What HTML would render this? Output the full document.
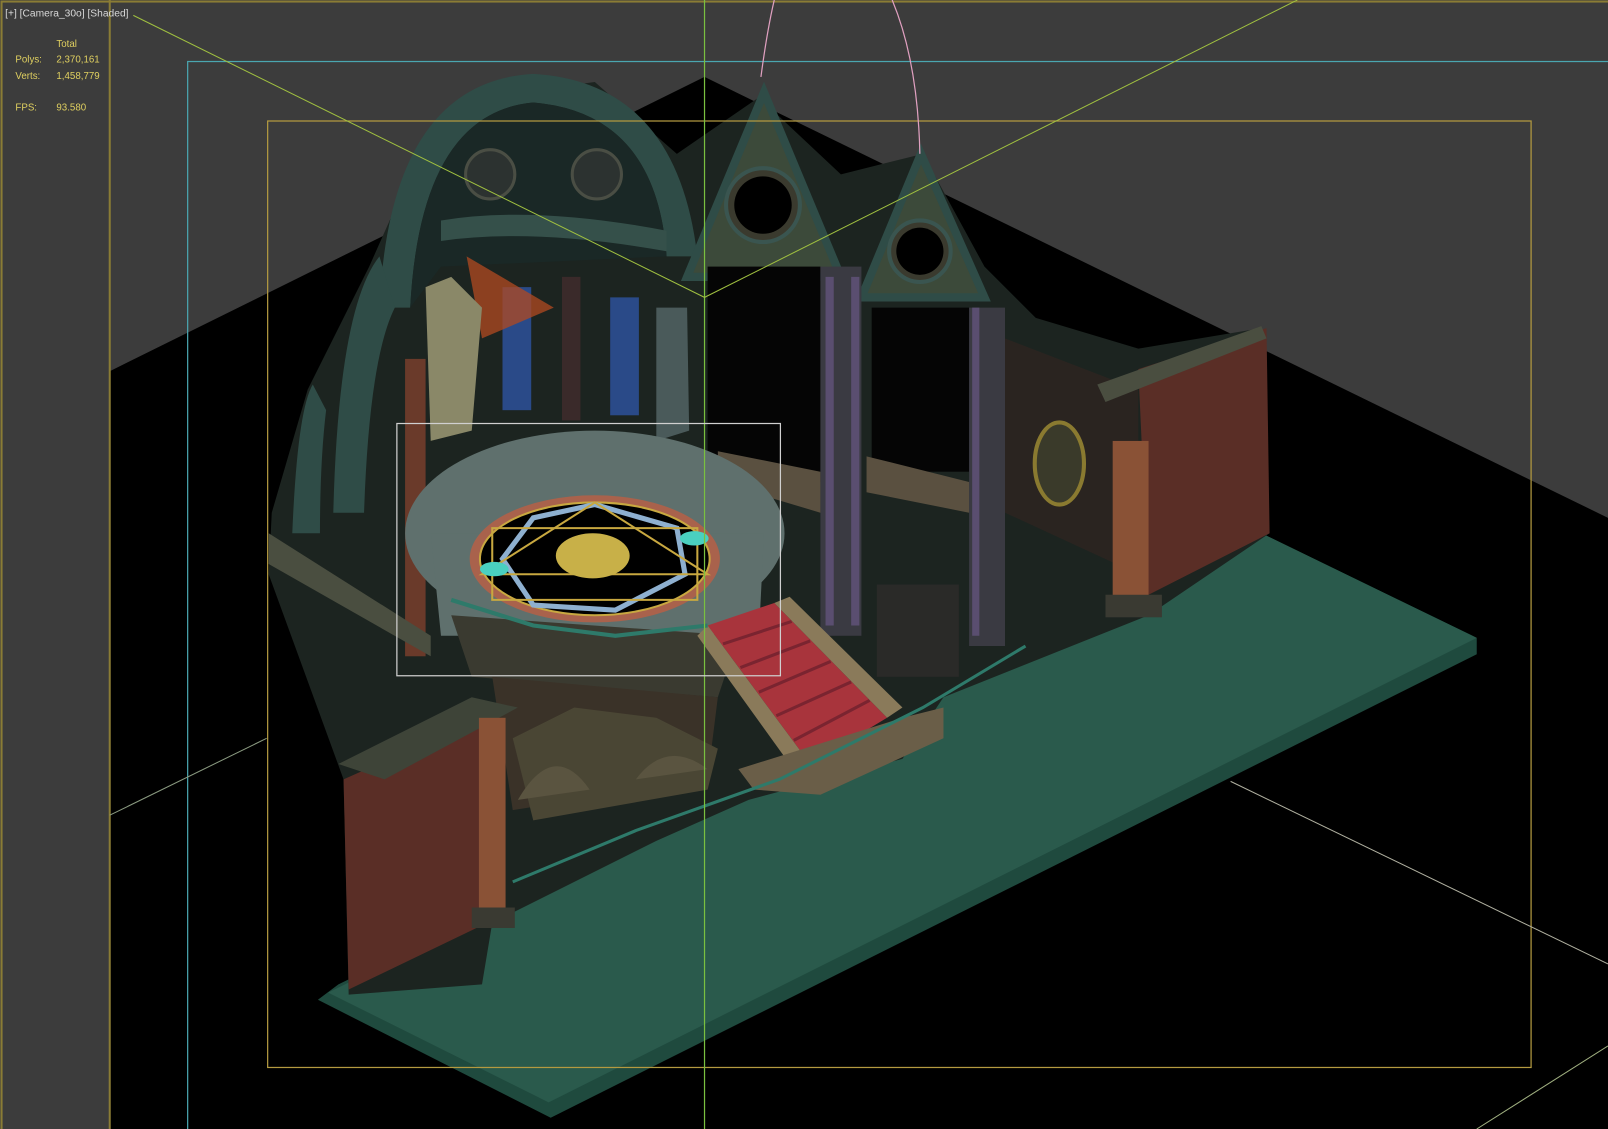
<!DOCTYPE html>
<html><head><meta charset="utf-8"><style>
html,body{margin:0;padding:0;background:#3c3c3c;overflow:hidden}
svg{display:block}
text{font-family:"Liberation Sans",sans-serif}
</style></head><body>
<svg width="1608" height="1129" viewBox="0 0 1568 1101" preserveAspectRatio="none" xmlns="http://www.w3.org/2000/svg">
<rect width="1568" height="1101" fill="#3c3c3c"/>
<polygon points="107,362 687,75 1568,505 1568,1101 107,1101" fill="#000"/>
<rect x="1.5" y="1.5" width="1570" height="1110" fill="none" stroke="#8a7c35" stroke-width="2"/>
<line x1="107" y1="0" x2="107" y2="1101" stroke="#8a7c35" stroke-width="2"/>
<text x="5" y="16" font-size="10" fill="#d8d8d8">[+] [Camera_30o] [Shaded]</text>
<text x="55" y="46" font-size="9.5" fill="#e0d060">Total</text>
<text x="15" y="61" font-size="9.5" fill="#e0d060">Polys:</text>
<text x="55" y="61" font-size="9.5" fill="#e0d060">2,370,161</text>
<text x="15" y="77" font-size="9.5" fill="#e0d060">Verts:</text>
<text x="55" y="77" font-size="9.5" fill="#e0d060">1,458,779</text>
<text x="15" y="108" font-size="9.5" fill="#e0d060">FPS:</text>
<text x="55" y="108" font-size="9.5" fill="#e0d060">93.580</text>

<polygon points="1230,520 1440,622 1440,638 537,1090 310,975 330,960" fill="#1f4a3e"/>
<polygon points="1230,520 1440,622 535,1075 320,968" fill="#2a5a4c"/>

<polygon points="265,500 300,380 360,260 400,170 470,95 580,80 660,150 740,95 820,170 900,150 960,260 1010,310 1110,340 1230,320 1238,520 1120,600 920,680 880,740 730,780 640,820 480,900 470,960 340,970 335,760 262,560" fill="#1c2420"/>
<path d="M370,300 Q380,80 520,72 Q660,80 680,250 L650,250 Q640,110 520,100 Q410,110 400,300 Z" fill="#2f4c47"/>
<path d="M400,300 Q410,110 520,100 Q640,110 650,250 L430,260 Z" fill="#1a2826"/>
<circle cx="478" cy="170" r="24" fill="#2c3230" stroke="#4a4e44" stroke-width="3"/>
<circle cx="582" cy="170" r="24" fill="#2c3230" stroke="#4a4e44" stroke-width="3"/>
<path d="M430,215 Q520,200 650,225 L650,245 Q520,222 430,235 Z" fill="#35504a"/>
<path d="M670,270 L745,90 L820,270 Z" fill="#3c4a3a" stroke="#2f4c47" stroke-width="8"/>
<path d="M840,290 L898,150 L960,290 Z" fill="#3c4a3a" stroke="#2f4c47" stroke-width="8"/>
<circle cx="744" cy="200" r="36" fill="#3a3a2e" stroke="#3a5550" stroke-width="4"/>
<circle cx="744" cy="200" r="28" fill="#000"/>
<circle cx="897" cy="245" r="30" fill="#3a3a2e" stroke="#3a5550" stroke-width="4"/>
<circle cx="897" cy="245" r="23" fill="#000"/>
<rect x="690" y="260" width="110" height="210" fill="#050505"/>
<rect x="850" y="300" width="95" height="160" fill="#050505"/>
<rect x="800" y="260" width="40" height="360" fill="#3a3a42"/>
<rect x="805" y="270" width="8" height="340" fill="#5a4e70"/>
<rect x="830" y="270" width="8" height="340" fill="#5a4e70"/>
<rect x="945" y="300" width="35" height="330" fill="#3a3a42"/>
<rect x="948" y="300" width="7" height="320" fill="#5a4e70"/>
<rect x="490" y="280" width="28" height="120" fill="#2a4a88"/>
<rect x="595" y="290" width="28" height="115" fill="#2a4a88"/>
<rect x="548" y="270" width="18" height="140" fill="#3a2a2a"/>
<polygon points="455,250 540,300 470,330" fill="#b24a20" opacity="0.75"/>
<polygon points="415,280 440,270 470,300 460,420 420,430" fill="#8a8868"/>
<polygon points="640,300 670,300 672,420 640,430" fill="#4a5a5a"/>
<path d="M325,500 Q330,300 370,250 L385,300 Q360,350 355,500 Z" fill="#2f4c47"/>
<path d="M285,520 Q290,400 305,375 L318,400 Q312,450 312,520 Z" fill="#2f4c47"/>
<rect x="395" y="350" width="20" height="290" fill="#6a3a2a"/>
<polygon points="980,330 1110,380 1110,560 980,500" fill="#2a2420"/>
<polygon points="1110,360 1235,320 1238,520 1120,580" fill="#5a2e26"/>
<polygon points="1070,375 1230,318 1235,330 1078,392" fill="#4a4e40"/>
<ellipse cx="1033" cy="452" rx="24" ry="40" fill="#3a3a2a" stroke="#8a7a30" stroke-width="4"/>
<rect x="1085" y="430" width="35" height="160" fill="#8a5236"/>
<rect x="1078" y="580" width="55" height="22" fill="#3a3a32"/>
<polygon points="700,440 800,460 800,500 700,470" fill="#5a5040"/>
<polygon points="845,445 945,470 945,500 845,480" fill="#5a5040"/>
<rect x="855" y="570" width="80" height="90" fill="#2a2a28"/>
<ellipse cx="580" cy="520" rx="185" ry="100" fill="#5f706d"/>
<polygon points="420,520 745,520 740,620 430,620" fill="#5f706d"/>
<ellipse cx="580" cy="545" rx="122" ry="62" fill="#a9624c"/>
<ellipse cx="580" cy="545" rx="112" ry="55" fill="#000" stroke="#c8a840" stroke-width="2"/>
<polygon points="580,492 660,515 668,560 600,595 520,590 490,545 520,505" fill="none" stroke="#8eb0d0" stroke-width="5"/>
<polygon points="480,515 680,515 680,585 480,585" fill="none" stroke="#c8a840" stroke-width="2"/>
<polygon points="580,490 690,560 470,560" fill="none" stroke="#c8a840" stroke-width="2"/>
<ellipse cx="578" cy="542" rx="36" ry="22" fill="#c8b048"/>
<ellipse cx="482" cy="555" rx="14" ry="7" fill="#4ad0c0"/>
<ellipse cx="677" cy="525" rx="14" ry="7" fill="#4ad0c0"/>
<polygon points="440,600 720,620 700,680 460,660" fill="#3a3a30"/>
<polygon points="480,660 700,680 690,760 500,790" fill="#3a3228"/>
<polygon points="500,720 560,690 640,700 700,730 690,770 520,800" fill="#4a4634"/>
<path d="M505,780 Q540,720 575,770 Z M620,760 Q650,720 690,750 Z" fill="#5a5440"/>
<polygon points="690,610 755,588 865,700 790,745" fill="#a8343c"/>
<g stroke="#7a2430" stroke-width="3">
<line x1="705" y1="628" x2="772" y2="606"/><line x1="722" y1="651" x2="790" y2="625"/>
<line x1="740" y1="675" x2="810" y2="645"/><line x1="757" y1="698" x2="830" y2="665"/>
<line x1="774" y1="722" x2="848" y2="683"/></g>
<polygon points="755,588 770,582 880,690 865,700" fill="#8a7a5a"/>
<polygon points="680,620 690,610 790,745 775,752" fill="#8a7a5a"/>
<polygon points="720,750 880,700 920,690 920,720 800,775 735,770" fill="#6a5e48"/>
<polygon points="335,760 470,700 475,900 340,965" fill="#5a2e26"/>
<polygon points="330,745 460,680 505,690 375,760" fill="#3e4438"/>
<rect x="467" y="700" width="26" height="190" fill="#8a5236"/>
<rect x="460" y="885" width="42" height="20" fill="#3a3a32"/>
<polygon points="262,520 420,620 420,640 262,550" fill="#4a4e40"/>
<polyline points="440,585 520,610 600,620 690,610" fill="none" stroke="#2e7a6a" stroke-width="4"/>
<polyline points="500,860 620,810 760,760 900,690 1000,630" fill="none" stroke="#2e7a6a" stroke-width="3"/>

<rect x="183" y="60" width="1400" height="1050" fill="none" stroke="#4aa6b0" stroke-width="1.2"/>
<rect x="261" y="118" width="1232" height="923" fill="none" stroke="#b49a40" stroke-width="1.2"/>
<line x1="687" y1="0" x2="687" y2="1101" stroke="#7ac040" stroke-width="1.2"/>
<polyline points="130,15 687,290 1265,0" fill="none" stroke="#a0c040" stroke-width="1"/>
<line x1="107" y1="795" x2="260" y2="720" stroke="#8a9a80" stroke-width="1"/>
<line x1="1200" y1="762" x2="1568" y2="940" stroke="#b0b0a0" stroke-width="1"/>
<line x1="1568" y1="1020" x2="1440" y2="1101" stroke="#a0b080" stroke-width="1"/>
<rect x="387" y="413" width="374" height="246" fill="none" stroke="#d0d0d0" stroke-width="1.2"/>
<path d="M742,75 Q748,30 755,0" fill="none" stroke="#e0a0c0" stroke-width="1.2"/>
<path d="M870,0 Q895,60 897,150" fill="none" stroke="#e0a0c0" stroke-width="1.2"/>
</svg>
</body></html>
